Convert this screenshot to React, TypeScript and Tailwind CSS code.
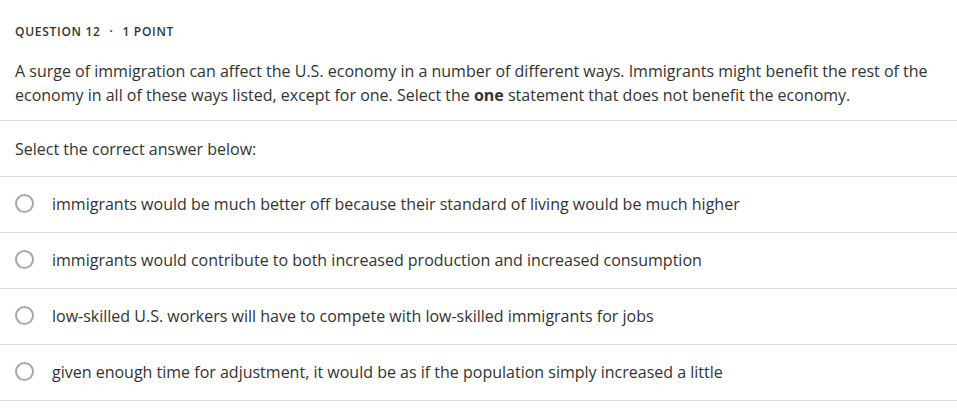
import React from "react";

const answers = [
  "immigrants would be much better off because their standard of living would be much higher",
  "immigrants would contribute to both increased production and increased consumption",
  "low-skilled U.S. workers will have to compete with low-skilled immigrants for jobs",
  "given enough time for adjustment, it would be as if the population simply increased a little",
];

export default function App() {
  return (
    <div className="w-[957px] h-[409px] bg-white text-[#333] font-['Open_Sans',sans-serif] overflow-hidden">
      <div className="px-[15px] pt-[24px] pb-[19px] text-[12px] font-semibold uppercase tracking-[0.06em] text-[#333] leading-[16px]">
        Question 12 <span className="mx-[5px]">·</span> 1 Point
      </div>
      <div className="px-[15px] pb-[13px] text-[16px] leading-[24px]">
        A surge of immigration can affect the U.S. economy in a number of different ways. Immigrants might benefit the rest of the
        economy in all of these ways listed, except for one. Select the <b className="font-bold">one</b> statement that does not benefit the economy.
      </div>
      <div className="border-t border-[#ddd] px-[15px] h-[56px] flex items-center text-[16px]">
        Select the correct answer below:
      </div>
      {answers.map((a) => (
        <div key={a} className="border-t border-[#ddd] h-[56px] flex items-center pl-[15px] pr-[15px] pb-[2px] text-[16px]">
          <span className="w-[19px] h-[19px] rounded-full border-2 border-[#a8a8a8] shrink-0" />
          <span className="ml-[18px]">{a}</span>
        </div>
      ))}
      <div className="border-t border-[#ddd]" />
    </div>
  );
}
